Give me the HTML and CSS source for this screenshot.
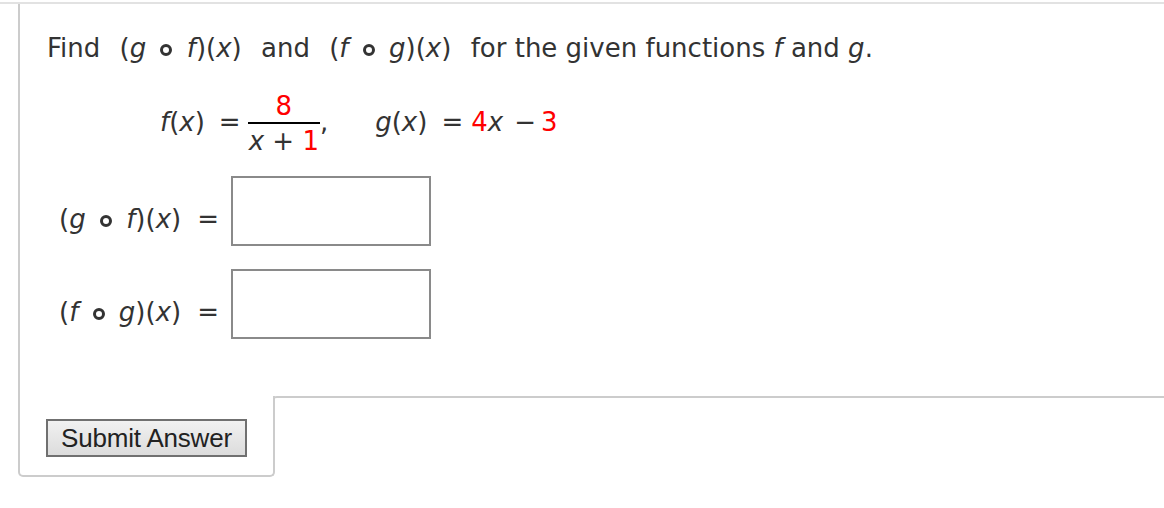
FILE: index.html
```html
<!DOCTYPE html>
<html lang="en">
<head>
<meta charset="utf-8">
<title>Composite functions</title>
<link rel="stylesheet" href="styles.css">
</head>
<body>
<div class="frame">
  <div class="question">
    <p class="prompt">Find <span class="m">(<i>g</i> <span class="ring"></span> <i>f</i>)(<i>x</i>)</span> and <span class="m">(<i>f</i> <span class="ring"></span> <i>g</i>)(<i>x</i>)</span> for the given functions <i>f</i> and <i>g</i>.</p>
    <div class="given"><span class="fn"><i>f</i>(<i>x</i>)</span><span class="op eq1">=</span><span class="frac"><span class="num red">8</span><span class="bar"></span><span class="den"><i>x</i> + <span class="red">1</span></span></span><span class="comma">,</span><span class="fn"><i>g</i>(<i>x</i>)</span><span class="op eq2">=</span><span class="red">4</span><i>x</i><span class="op minus">−</span><span class="red">3</span></div>
    <div class="answers">
      <div class="ans-row">
        <span class="lbl">(<i>g</i> <span class="ring"></span> <i>f</i>)(<i>x</i>)</span>
        <span class="eq">=</span>
        <span class="box"></span>
      </div>
      <div class="ans-row">
        <span class="lbl">(<i>f</i> <span class="ring"></span> <i>g</i>)(<i>x</i>)</span>
        <span class="eq">=</span>
        <span class="box"></span>
      </div>
    </div>
  </div>
  <div class="footer">
    <div class="tab"><button class="submit" type="button">Submit Answer</button></div>
    <div class="rest"></div>
  </div>
</div>
</body>
</html>
```

FILE: styles.css
```css
html, body {
  margin: 0;
  padding: 0;
  background: #fff;
}

body {
  font-family: "DejaVu Sans", Verdana, sans-serif;
  font-size: 26px;
  color: #333;
}

i {
  font-style: italic;
}

.red {
  color: #f00;
}

.frame {
  margin-top: 2px;
  border-top: 2px solid #e2e2e2;
}

.question {
  margin-left: 18px;
  border-left: 2px solid #ccc;
  padding: 29px 0 0 27px;
  height: 363px;
}

.prompt {
  margin: 0;
  line-height: 30px;
  white-space: nowrap;
}

.m {
  margin: 0 11px;
}

.ring {
  display: inline-block;
  width: 6px;
  height: 6px;
  border: 3px solid currentColor;
  border-radius: 50%;
  vertical-align: 1px;
  margin: 0 6px;
}

.given {
  margin: 29px 0 0 113px;
  line-height: 30px;
  white-space: nowrap;
}

.op {
  display: inline-block;
}

.eq1 {
  margin: 0 7px 0 14px;
}

.eq2 {
  margin: 0 8px 0 14px;
}

.minus {
  margin: 0 5px 0 11px;
}

.frac {
  display: inline-block;
  vertical-align: -19px;
}

.num,
.den {
  display: block;
  text-align: center;
  line-height: 28px;
}

.bar {
  display: block;
  height: 2px;
  background: #000;
  margin: 2px 0 3px;
}

.den {
  padding: 0 1px;
}

.comma {
  margin-right: 47px;
}

.answers {
  margin: 21px 0 0 12px;
  display: flex;
  flex-direction: column;
  gap: 23px;
}

.ans-row {
  display: flex;
  align-items: center;
  line-height: 30px;
}

.lbl {
  white-space: nowrap;
  position: relative;
  top: 8px;
}

.eq {
  margin-left: 16px;
  position: relative;
  top: 8px;
}

.box {
  margin-left: 12px;
  width: 196px;
  height: 66px;
  border: 2px solid #8a8a8a;
  background: #fff;
}

.footer {
  display: flex;
}

.tab {
  margin-left: 18px;
  width: 257px;
  box-sizing: border-box;
  border-left: 2px solid #ccc;
  border-right: 2px solid #ccc;
  border-bottom: 2px solid #ccc;
  border-radius: 0 0 5px 5px;
  padding: 23px 0 18px 26px;
}

.submit {
  display: block;
  width: 201px;
  height: 38px;
  padding: 0;
  border: 2px solid #707070;
  border-radius: 0;
  background: linear-gradient(#f1f1f1, #dcdcdc);
  font-family: "Liberation Sans", Arial, sans-serif;
  font-size: 26px;
  letter-spacing: -0.2px;
  color: #222;
}

.rest {
  flex: 1;
  border-top: 2px solid #ccc;
  border-top-left-radius: 4px;
  margin-left: -2px;
}
```
